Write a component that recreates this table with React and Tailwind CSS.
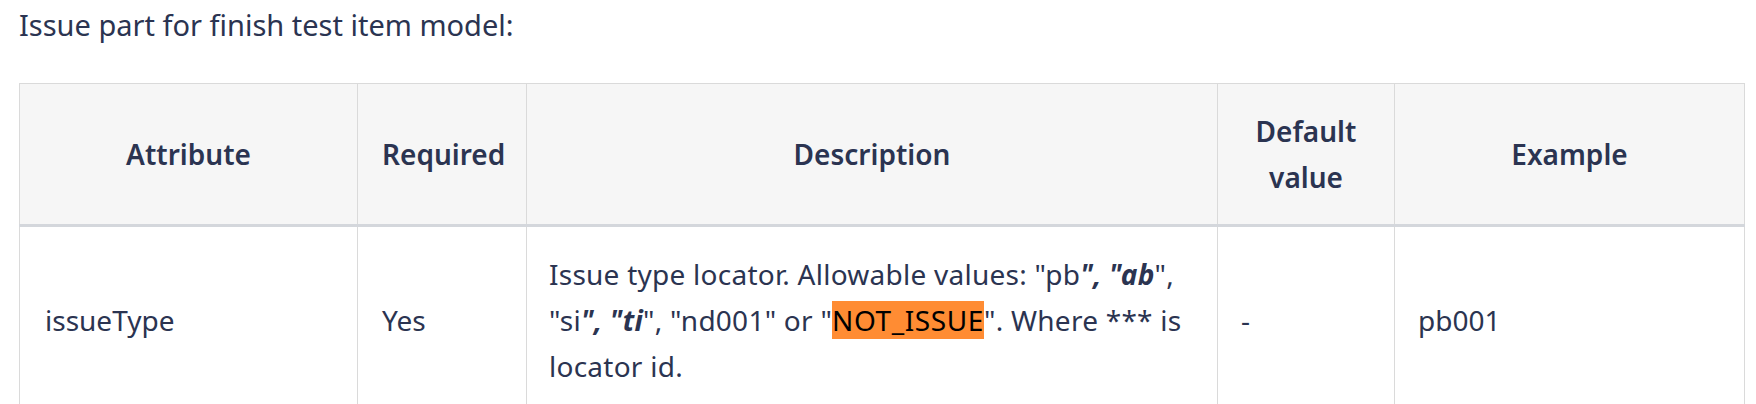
export default function App() {
  const font = { fontFamily: '"Noto Sans", "Open Sans", sans-serif' };
  return (
    <div className="w-[1756px] h-[404px] overflow-hidden bg-white text-[#2b3451]" style={font}>
      <div className="pl-[19px] pt-[2px]">
        <p className="text-[29px] leading-[46px]">Issue part for finish test item model:</p>
        <table className="mt-[35px] w-[1725px] table-fixed border-collapse border border-[#dadada] text-[28px] leading-[46px]">
          <colgroup>
            <col className="w-[338px]" />
            <col className="w-[169px]" />
            <col className="w-[691px]" />
            <col className="w-[177px]" />
            <col className="w-[350px]" />
          </colgroup>
          <thead>
            <tr className="bg-[#f6f6f6]">
              <th className="border border-[#dadada] border-b-[3px] border-b-[#d4d7dc] px-[24px] py-[24px] h-[140px] text-center font-semibold">Attribute</th>
              <th className="border border-[#dadada] border-b-[3px] border-b-[#d4d7dc] px-[24px] py-[24px] text-center font-semibold">Required</th>
              <th className="border border-[#dadada] border-b-[3px] border-b-[#d4d7dc] px-[24px] py-[24px] text-center font-semibold">Description</th>
              <th className="border border-[#dadada] border-b-[3px] border-b-[#d4d7dc] px-[24px] py-[24px] text-center font-semibold">Default value</th>
              <th className="border border-[#dadada] border-b-[3px] border-b-[#d4d7dc] px-[24px] py-[24px] text-center font-semibold">Example</th>
            </tr>
          </thead>
          <tbody>
            <tr>
              <td className="border border-[#dadada] px-[25px] py-[24px] align-middle">issueType</td>
              <td className="border border-[#dadada] px-[24px] py-[24px] align-middle">Yes</td>
              <td className="border border-[#dadada] px-[22px] py-[24px] align-middle whitespace-nowrap tracking-[0.25px]">
                Issue type locator. Allowable values: "pb<strong><em>", "ab</em></strong>",
                <br />
                "si<strong><em>", "ti</em></strong>", "nd001" or "<mark className="bg-[#ff8c33] text-black tracking-[0.6px]">NOT_ISSUE</mark>". Where *** is
                <br />
                locator id.
              </td>
              <td className="border border-[#dadada] px-[23px] py-[24px] align-middle">-</td>
              <td className="border border-[#dadada] px-[23px] py-[24px] align-middle">pb001</td>
            </tr>
          </tbody>
        </table>
      </div>
    </div>
  );
}
